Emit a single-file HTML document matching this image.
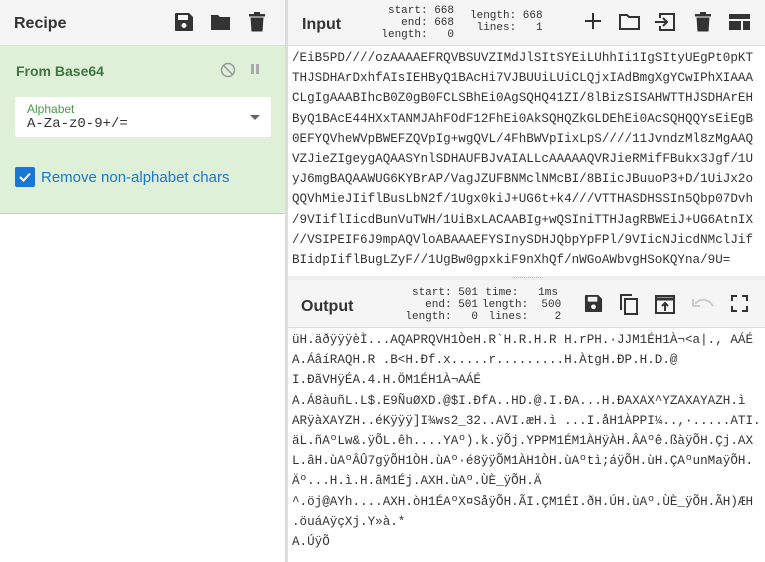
<!DOCTYPE html><html><head><meta charset="utf-8"><style>
body{margin:0;width:765px;height:562px;overflow:hidden;font-family:"Liberation Sans",sans-serif;background:#fff;position:relative}
.a{position:absolute}
.hdr{background:#f5f5f5;border-bottom:1px solid #ddd}
.t{font-weight:bold;font-size:16px;color:#333}
.mono{font-family:"Liberation Mono",monospace;font-size:12.6px;color:#333;white-space:pre;line-height:20.2px}
.st{font-family:"Liberation Mono",monospace;font-size:11px;color:#333;white-space:pre;line-height:12px;text-align:right}
svg{position:absolute}
</style></head><body>
<div class="a" style="left:285px;top:0;width:3px;height:562px;background:#ddd"></div>
<div class="a hdr" style="left:0;top:0;width:285px;height:45px"></div>
<div class="a t" style="left:14px;top:15px">Recipe</div>
<svg style="left:174px;top:12px" width="20" height="20" viewBox="0 0 20 20"><path d="M2 1h13l4 4v13a1 1 0 0 1-1 1H2a1 1 0 0 1-1-1V2a1 1 0 0 1 1-1z" fill="#333"/><rect x="4" y="3" width="10" height="5" fill="#f5f5f5"/><circle cx="10" cy="13.5" r="2.5" fill="#f5f5f5"/></svg>
<svg style="left:210px;top:13px" width="22" height="18" viewBox="0 0 22 18"><path d="M1 2h7l2 2h10v13H1z" fill="#333"/></svg>
<svg style="left:249px;top:12px" width="16" height="20" viewBox="0 0 16 20"><rect x="0" y="2" width="16" height="2.5" fill="#333"/><rect x="5" y="0" width="6" height="3" fill="#333"/><path d="M1.5 5.5h13l-1 14h-11z" fill="#333"/></svg>
<div class="a" style="left:0;top:46px;width:285px;height:167px;background:#dff0d8;border-bottom:1px solid #ccc"></div>
<div class="a" style="left:16px;top:63px;font-weight:bold;font-size:14px;color:#3c763d">From Base64</div>
<svg style="left:220px;top:62px" width="16" height="16" viewBox="0 0 16 16"><circle cx="8" cy="8" r="6.5" fill="none" stroke="#999" stroke-width="1.5"/><path d="M3.5 3.5l9 9" stroke="#999" stroke-width="1.5"/></svg>
<div class="a" style="left:251px;top:64px;width:3px;height:10px;background:#aaa"></div><div class="a" style="left:256px;top:64px;width:3px;height:10px;background:#aaa"></div>
<div class="a" style="left:15px;top:97px;width:256px;height:40px;background:#fff;border-radius:2px"></div>
<div class="a" style="left:27px;top:102px;font-size:12px;color:#4a9a4a">Alphabet</div>
<div class="a mono" style="left:27px;top:114px;font-size:14px;line-height:20px">A-Za-z0-9+/=</div>
<div class="a" style="left:250px;top:115px;width:0;height:0;border-left:5px solid transparent;border-right:5px solid transparent;border-top:5px solid #666"></div>
<div class="a" style="left:15px;top:167px;width:20px;height:20px;background:#1976d2;border-radius:2px"></div>
<svg style="left:15px;top:167px" width="20" height="20"><path d="M5 10l3.5 3.5L15 6.5" fill="none" stroke="#fff" stroke-width="2"/></svg>
<div class="a" style="left:41px;top:169px;font-size:15px;color:#1976d2">Remove non-alphabet chars</div>

<div class="a hdr" style="left:288px;top:0;width:477px;height:45px"></div>
<div class="a t" style="left:302px;top:16px">Input</div>
<div class="a st" style="left:380px;top:5px;width:74px">start: 668
  end: 668
length:   0</div>
<div class="a st" style="left:470px;top:10px;width:68px">length: 668
 lines:   1</div>
<svg style="left:584px;top:12px" width="18" height="18"><path d="M9 1v16M1 9h16" stroke="#333" stroke-width="2"/></svg>
<svg style="left:619px;top:13px" width="21" height="17"><path d="M1 2h7l2 2h10v12H1z" fill="none" stroke="#333" stroke-width="2"/></svg>
<svg style="left:654px;top:12px" width="22" height="20"><path d="M6 6V2h14v16H6v-4" fill="none" stroke="#333" stroke-width="2"/><path d="M1 10h12M9 6l4 4-4 4" fill="none" stroke="#333" stroke-width="2"/></svg>
<svg style="left:695px;top:12px" width="16" height="20" viewBox="0 0 16 20"><rect x="0" y="2" width="16" height="2.5" fill="#333"/><rect x="5" y="0" width="6" height="3" fill="#333"/><path d="M1.5 5.5h13l-1 14h-11z" fill="#333"/></svg>
<svg style="left:729px;top:14px" width="21" height="16"><rect x="0" y="0" width="21" height="5" fill="#333"/><rect x="0" y="7" width="12" height="9" fill="#333"/><rect x="14" y="7" width="7" height="9" fill="#333"/></svg>
<div class="a mono" style="left:292px;top:48px">/EiB5PD////ozAAAAEFRQVBSUVZIMdJlSItSYEiLUhhIi1IgSItyUEgPt0pKT
THJSDHArDxhfAIsIEHByQ1BAcHi7VJBUUiLUiCLQjxIAdBmgXgYCwIPhXIAAA
CLgIgAAABIhcB0Z0gB0FCLSBhEi0AgSQHQ41ZI/8lBizSISAHWTTHJSDHArEH
ByQ1BAcE44HXxTANMJAhFOdF12FhEi0AkSQHQZkGLDEhEi0AcSQHQQYsEiEgB
0EFYQVheWVpBWEFZQVpIg+wgQVL/4FhBWVpIixLpS////11JvndzMl8zMgAAQ
VZJieZIgeygAQAASYnlSDHAUFBJvAIALLcAAAAAQVRJieRMifFBukx3Jgf/1U
yJ6mgBAQAAWUG6KYBrAP/VagJZUFBNMclNMcBI/8BIicJBuuoP3+D/1UiJx2o
QQVhMieJIiflBusLbN2f/1Ugx0kiJ+UG6t+k4///VTTHASDHSSIn5Qbp07Dvh
/9VIiflIicdBunVuTWH/1UiBxLACAABIg+wQSIniTTHJagRBWEiJ+UG6AtnIX
//VSIPEIF6J9mpAQVloABAAAEFYSInySDHJQbpYpFPl/9VIicNJicdNMclJif
BIidpIiflBugLZyF//1UgBw0gpxkiF9nXhQf/nWGoAWbvgHSoKQYna/9U=</div>
<div class="a" style="left:288px;top:276px;width:477px;height:4px;background:#eee"></div>
<div class="a" style="left:513px;top:277px;width:30px;height:1px;border-top:1px dotted #bbb"></div>
<div class="a hdr" style="left:288px;top:280px;width:477px;height:47px"></div>
<div class="a t" style="left:301px;top:298px">Output</div>
<div class="a st" style="left:400px;top:287px;width:78px">start: 501
  end: 501
length:   0</div>
<div class="a st" style="left:482px;top:287px;width:76px">time:   1ms
length:  500
 lines:    2</div>
<svg style="left:584px;top:294px" width="19" height="19" viewBox="0 0 20 20"><path d="M2 1h13l4 4v13a1 1 0 0 1-1 1H2a1 1 0 0 1-1-1V2a1 1 0 0 1 1-1z" fill="#333"/><rect x="4" y="3" width="10" height="5" fill="#f5f5f5"/><circle cx="10" cy="13.5" r="2.5" fill="#f5f5f5"/></svg>
<svg style="left:619px;top:293px" width="20" height="23"><path d="M2 17V2h11" fill="none" stroke="#333" stroke-width="2"/><rect x="6" y="6" width="12" height="15" fill="none" stroke="#333" stroke-width="2"/></svg>
<svg style="left:655px;top:295px" width="20" height="19"><rect x="1" y="1" width="18" height="17" fill="none" stroke="#333" stroke-width="2"/><path d="M1 4h18" stroke="#333" stroke-width="3"/><path d="M10 16V9M7 11l3-3 3 3" fill="none" stroke="#333" stroke-width="2"/></svg>
<svg style="left:692px;top:297px" width="22" height="14"><path d="M3 7c5-6 13-6 18 2" fill="none" stroke="#ccc" stroke-width="2"/><path d="M1 2v7h7" fill="none" stroke="#ccc" stroke-width="2"/></svg>
<svg style="left:731px;top:295px" width="17" height="17"><path d="M1 6V1h5M11 1h5v5M16 11v5h-5M6 16H1v-5" fill="none" stroke="#333" stroke-width="2"/></svg>
<div class="a mono" style="left:292px;top:330px">üH.äðÿÿÿèÌ...AQAPRQVH1ÒeH.R`H.R.H.R H.rPH.·JJM1ÉH1À¬&lt;a|., AÁÉ
A.ÁâíRAQH.R .B&lt;H.Ðf.x.....r.........H.ÀtgH.ÐP.H.D.@
I.ÐãVHÿÉA.4.H.ÖM1ÉH1À¬AÁÉ
A.Á8àuñL.L$.E9ÑuØXD.@$I.ÐfA..HD.@.I.ÐA...H.ÐAXAX^YZAXAYAZH.ì
ARÿàXAYZH..éKÿÿÿ]I¾ws2_32..AVI.æH.ì ...I.åH1ÀPPI¼..,·.....ATI.
äL.ñAºLw&amp;.ÿÕL.êh....YAº).k.ÿÕj.YPPM1ÉM1ÀHÿÀH.ÂAºê.ßàÿÕH.Çj.AX
L.âH.ùAºÂÛ7gÿÕH1ÒH.ùAº·é8ÿÿÕM1ÀH1ÒH.ùAºtì;áÿÕH.ùH.ÇAºunMaÿÕH.
Äº...H.ì.H.âM1Éj.AXH.ùAº.ÙÈ_ÿÕH.Ä
^.öj@AYh....AXH.òH1ÉAºX¤SåÿÕH.ÃI.ÇM1ÉI.ðH.ÚH.ùAº.ÙÈ_ÿÕH.ÃH)ÆH
.öuáAÿçXj.Y»à.*
A.ÚÿÕ</div>
</body></html>
